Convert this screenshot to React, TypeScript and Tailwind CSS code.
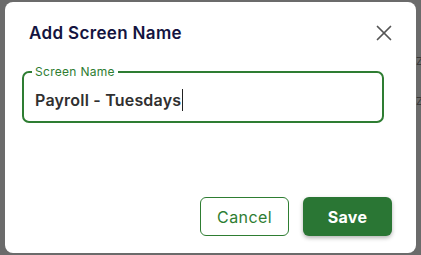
import { X } from "lucide-react";

const font = { fontFamily: "Inter, 'Noto Sans', sans-serif" };

export default function App() {
  return (
    <div className="relative h-[255px] w-[421px] overflow-hidden bg-[#6b6b6b] pl-[5px] pt-[2px]" style={font}>
      {/* bits of the page behind the overlay */}
      <span className="absolute left-[416px] top-[53px] text-[11px] text-[#3a3a3a]">Z</span>
      <span className="absolute left-[416px] top-[93px] text-[11px] text-[#3a3a3a]">Z</span>

      <div className="relative flex h-[251px] w-[411px] flex-col rounded-[8px] bg-white">
        <div className="flex h-[26px] items-center justify-between pl-[24px] pr-[19px] mt-[18px]">
          <h2 className="text-[17px] font-semibold leading-[22px] tracking-[0.35px] text-[#141440]">Add Screen Name</h2>
          <button className="text-[#555]">
            <X className="h-[26px] w-[26px]" strokeWidth={1.6} />
          </button>
        </div>

        <fieldset className="ml-[17px] mt-[20px] h-[57px] w-[362px] rounded-[7px] border-2 border-[#2e7d32] px-[8px]">
          <legend className="px-[3px] text-[12px] leading-[12px] tracking-[0.3px] text-[#2e7d32]">Screen Name</legend>
          <div className="mt-[10px] flex items-center pl-[3px] text-[16px] font-semibold tracking-[0.2px] text-[#303030]">
            Payroll - Tuesdays
            <span className="ml-[1px] h-[22px] w-[1px] bg-[#222]" />
          </div>
        </fieldset>

        <div className="mt-auto flex justify-end gap-[14px] pb-[17px] pr-[24px]">
          <button className="h-[39px] w-[89px] rounded-[6px] border border-[#2e7d32] text-[16px] tracking-[0.4px] text-[#2e7d32]">
            Cancel
          </button>
          <button className="h-[39px] w-[89px] rounded-[6px] bg-[#2a7634] text-[16px] font-bold tracking-[0.3px] text-white shadow-[0_2px_4px_rgba(0,0,0,0.3)]">
            Save
          </button>
        </div>
      </div>
    </div>
  );
}
